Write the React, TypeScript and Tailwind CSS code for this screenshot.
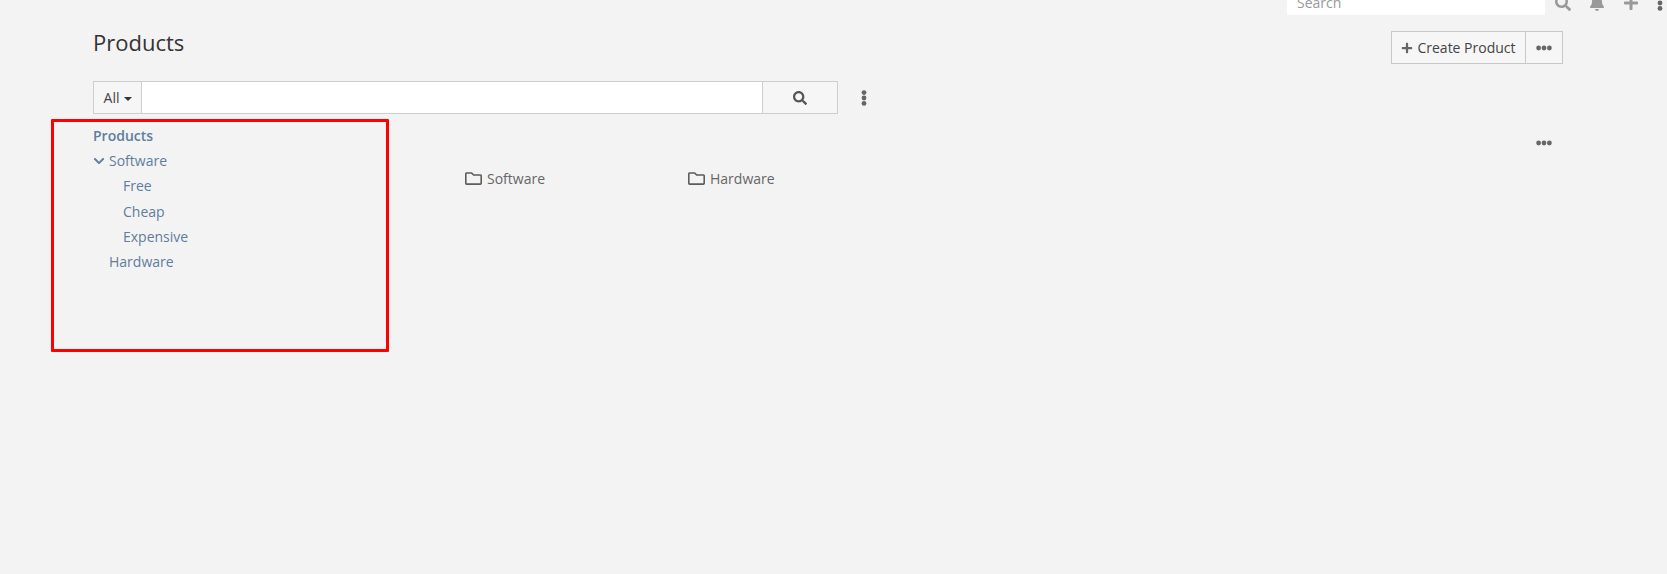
import { FaSearch, FaBell, FaPlus, FaChevronDown, FaRegFolder } from "react-icons/fa";

function Dots({ vertical = false }: { vertical?: boolean }) {
  return (
    <svg width={vertical ? 6 : 16} height={vertical ? 16 : 6} viewBox={vertical ? "0 0 6 16" : "0 0 16 6"} fill="#666">
      {vertical ? (
        <>
          <circle cx="3" cy="2.6" r="2.4" />
          <circle cx="3" cy="8" r="2.4" />
          <circle cx="3" cy="13.4" r="2.4" />
        </>
      ) : (
        <>
          <circle cx="2.6" cy="3" r="2.4" />
          <circle cx="8" cy="3" r="2.4" />
          <circle cx="13.4" cy="3" r="2.4" />
        </>
      )}
    </svg>
  );
}

function TreeRow({ label, indent, bold, chevron }: { label: string; indent: string; bold?: boolean; chevron?: boolean }) {
  return (
    <div className={`flex h-[25.3px] items-center ${indent} ${bold ? "font-semibold" : ""}`}>
      {chevron && <FaChevronDown className="mr-[4px] h-[12px] w-[12px] text-[#5f7d9c]" />}
      <span>{label}</span>
    </div>
  );
}

function FolderItem({ label, className }: { label: string; className: string }) {
  return (
    <div className={`flex items-center gap-[5px] ${className}`}>
      <FaRegFolder className="mt-[-2px] h-[17px] w-[17px] text-[#5c5c5c]" />
      <span>{label}</span>
    </div>
  );
}

export default function App() {
  return (
    <div className="relative h-[574px] w-[1667px] overflow-hidden bg-[#f3f3f3] font-['Open_Sans',sans-serif] text-sm text-[#666]">
      <header className="flex h-[15px] items-end overflow-hidden pl-[1287px]">
        <div className="flex h-[25px] w-[258px] shrink-0 items-center bg-white pl-[10px] text-[#999]">Search</div>
        <div className="ml-[10px] flex h-[25px] shrink-0 items-center gap-[18px] text-[#999]">
          <FaSearch className="h-[16px] w-[16px]" />
          <FaBell className="h-[16px] w-[16px]" />
          <FaPlus className="h-[16px] w-[16px]" />
          <Dots vertical />
        </div>
      </header>

      <main className="pl-[93px] pr-[104px]">
        <div className="flex h-[48px] items-start justify-between pt-[16px]">
          <h1 className="mt-[-4px] text-[22px] leading-[30px] text-[#333]">Products</h1>
          <div className="flex h-[33px] border border-[#c8c8c8] bg-[#f6f6f6]">
            <button className="flex w-[134px] items-center justify-center gap-[4px] border-r border-[#c8c8c8] text-[#444]">
              <FaPlus className="h-[12px] w-[12px] text-[#666]" />
              Create Product
            </button>
            <button className="flex w-[36px] items-center justify-center">
              <Dots />
            </button>
          </div>
        </div>

        <div className="mt-[18px] flex items-center">
          <div className="flex h-[33px] w-[745px] border border-[#cecece]">
            <button className="flex w-[48px] items-center justify-center gap-[5px] border-r border-[#cecece] bg-[#f6f6f6] pl-[1px] text-[#444]">
              All
              <span className="mt-[2px] h-0 w-0 border-x-[4px] border-t-[4px] border-x-transparent border-t-[#333]" />
            </button>
            <div className="flex-1 bg-white" />
            <button className="flex w-[75px] items-center justify-center border-l border-[#cecece] bg-[#f6f6f6]">
              <FaSearch className="h-[14px] w-[14px] text-[#555]" />
            </button>
          </div>
          <div className="ml-[23px]">
            <Dots vertical />
          </div>
        </div>

        <div className="mt-[9px] flex items-start">
          <nav className="w-[372px] shrink-0 text-[#5f7d9c]">
            <TreeRow label="Products" indent="" bold />
            <TreeRow label="Software" indent="" chevron />
            <TreeRow label="Free" indent="pl-[30px]" />
            <TreeRow label="Cheap" indent="pl-[30px]" />
            <TreeRow label="Expensive" indent="pl-[30px]" />
            <TreeRow label="Hardware" indent="pl-[16px]" />
          </nav>
          <div className="flex flex-1 items-start justify-between">
            <div className="mt-[46px] flex">
              <FolderItem label="Software" className="w-[223px]" />
              <FolderItem label="Hardware" className="" />
            </div>
            <div className="mt-[17px] mr-[11px]">
              <Dots />
            </div>
          </div>
        </div>
      </main>

      <div className="absolute left-[51px] top-[119px] h-[233px] w-[338px] rounded-[1px] border-[3px] border-[#ff0000]" />
    </div>
  );
}
